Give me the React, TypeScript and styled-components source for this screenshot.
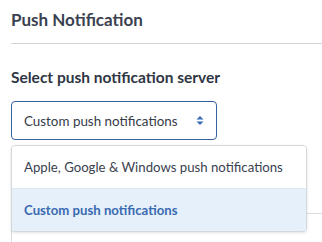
import React from "react";
import styled, { createGlobalStyle } from "styled-components";

const Global = createGlobalStyle`
  html, body { margin: 0; padding: 0; background: #fff; }
  body { font-family: Lato, "Open Sans", sans-serif; color: #3a4150; -webkit-font-smoothing: antialiased; }
  * { box-sizing: border-box; }
`;

const Page = styled.div`
  position: relative;
  width: 322px;
  height: 242px;
  overflow: hidden;
  padding-left: 11px;
`;

const Header = styled.div`
  height: 44px;
  border-bottom: 1px solid #d3d6da;
  display: flex;
  align-items: flex-start;
  padding-top: 9px;
`;

const Title = styled.h1`
  margin: 0;
  font-size: 17px;
  font-weight: 700;
  color: #3a4150;
  line-height: 22px;
`;

const Section = styled.div`
  padding-top: 23px;
  display: flex;
  flex-direction: column;
  align-items: flex-start;
`;

const Label = styled.label`
  font-size: 15.5px;
  font-weight: 700;
  color: #2f3644;
  line-height: 20px;
  margin-bottom: 14px;
`;

const SelectBox = styled.div`
  width: 206px;
  height: 39px;
  border: 1px solid #36609e;
  border-radius: 4px;
  display: flex;
  align-items: center;
  justify-content: space-between;
  padding: 0 12px 0 12px;
  font-size: 13.4px;
  color: #353b47;
`;

const Card = styled.div`
  margin-top: 73px;
  height: 40px;
  border-top: 1px solid #d9dce0;
  border-left: 1px solid #d9dce0;
`;

const Menu = styled.ul`
  position: absolute;
  left: 11px;
  top: 145px;
  width: 296px;
  margin: 0;
  padding: 0;
  list-style: none;
  background: #fff;
  border: 1px solid #d4d8dd;
  border-radius: 4px;
  box-shadow: 0 1px 3px rgba(0, 0, 0, 0.12);
  overflow: hidden;
`;

const Option = styled.li<{ $active?: boolean }>`
  height: ${(p) => (p.$active ? "43px" : "42px")};
  display: flex;
  align-items: center;
  padding-left: 12px;
  font-size: 13.2px;
  font-weight: ${(p) => (p.$active ? 700 : 400)};
  color: ${(p) => (p.$active ? "#3a6ab0" : "#3a4150")};
  background: ${(p) => (p.$active ? "#e5f0fb" : "#fff")};
  border-top: ${(p) => (p.$active ? "1px solid #dfe7ef" : "none")};
`;

const Arrows = () => (
  <svg width="8" height="11" viewBox="0 0 8 11">
    <path d="M0.5 4.5 L4 1 L7.5 4.5 Z" fill="#3b6bb3" />
    <path d="M0.5 6.5 L4 10 L7.5 6.5 Z" fill="#3b6bb3" />
  </svg>
);

export default function App() {
  return (
    <>
      <Global />
      <Page>
        <Header>
          <Title>Push Notification</Title>
        </Header>
        <Section>
          <Label>Select push notification server</Label>
          <SelectBox>
            <span>Custom push notifications</span>
            <Arrows />
          </SelectBox>
        </Section>
        <Card />
        <Menu>
          <Option>Apple, Google &amp; Windows push notifications</Option>
          <Option $active>Custom push notifications</Option>
        </Menu>
      </Page>
    </>
  );
}
